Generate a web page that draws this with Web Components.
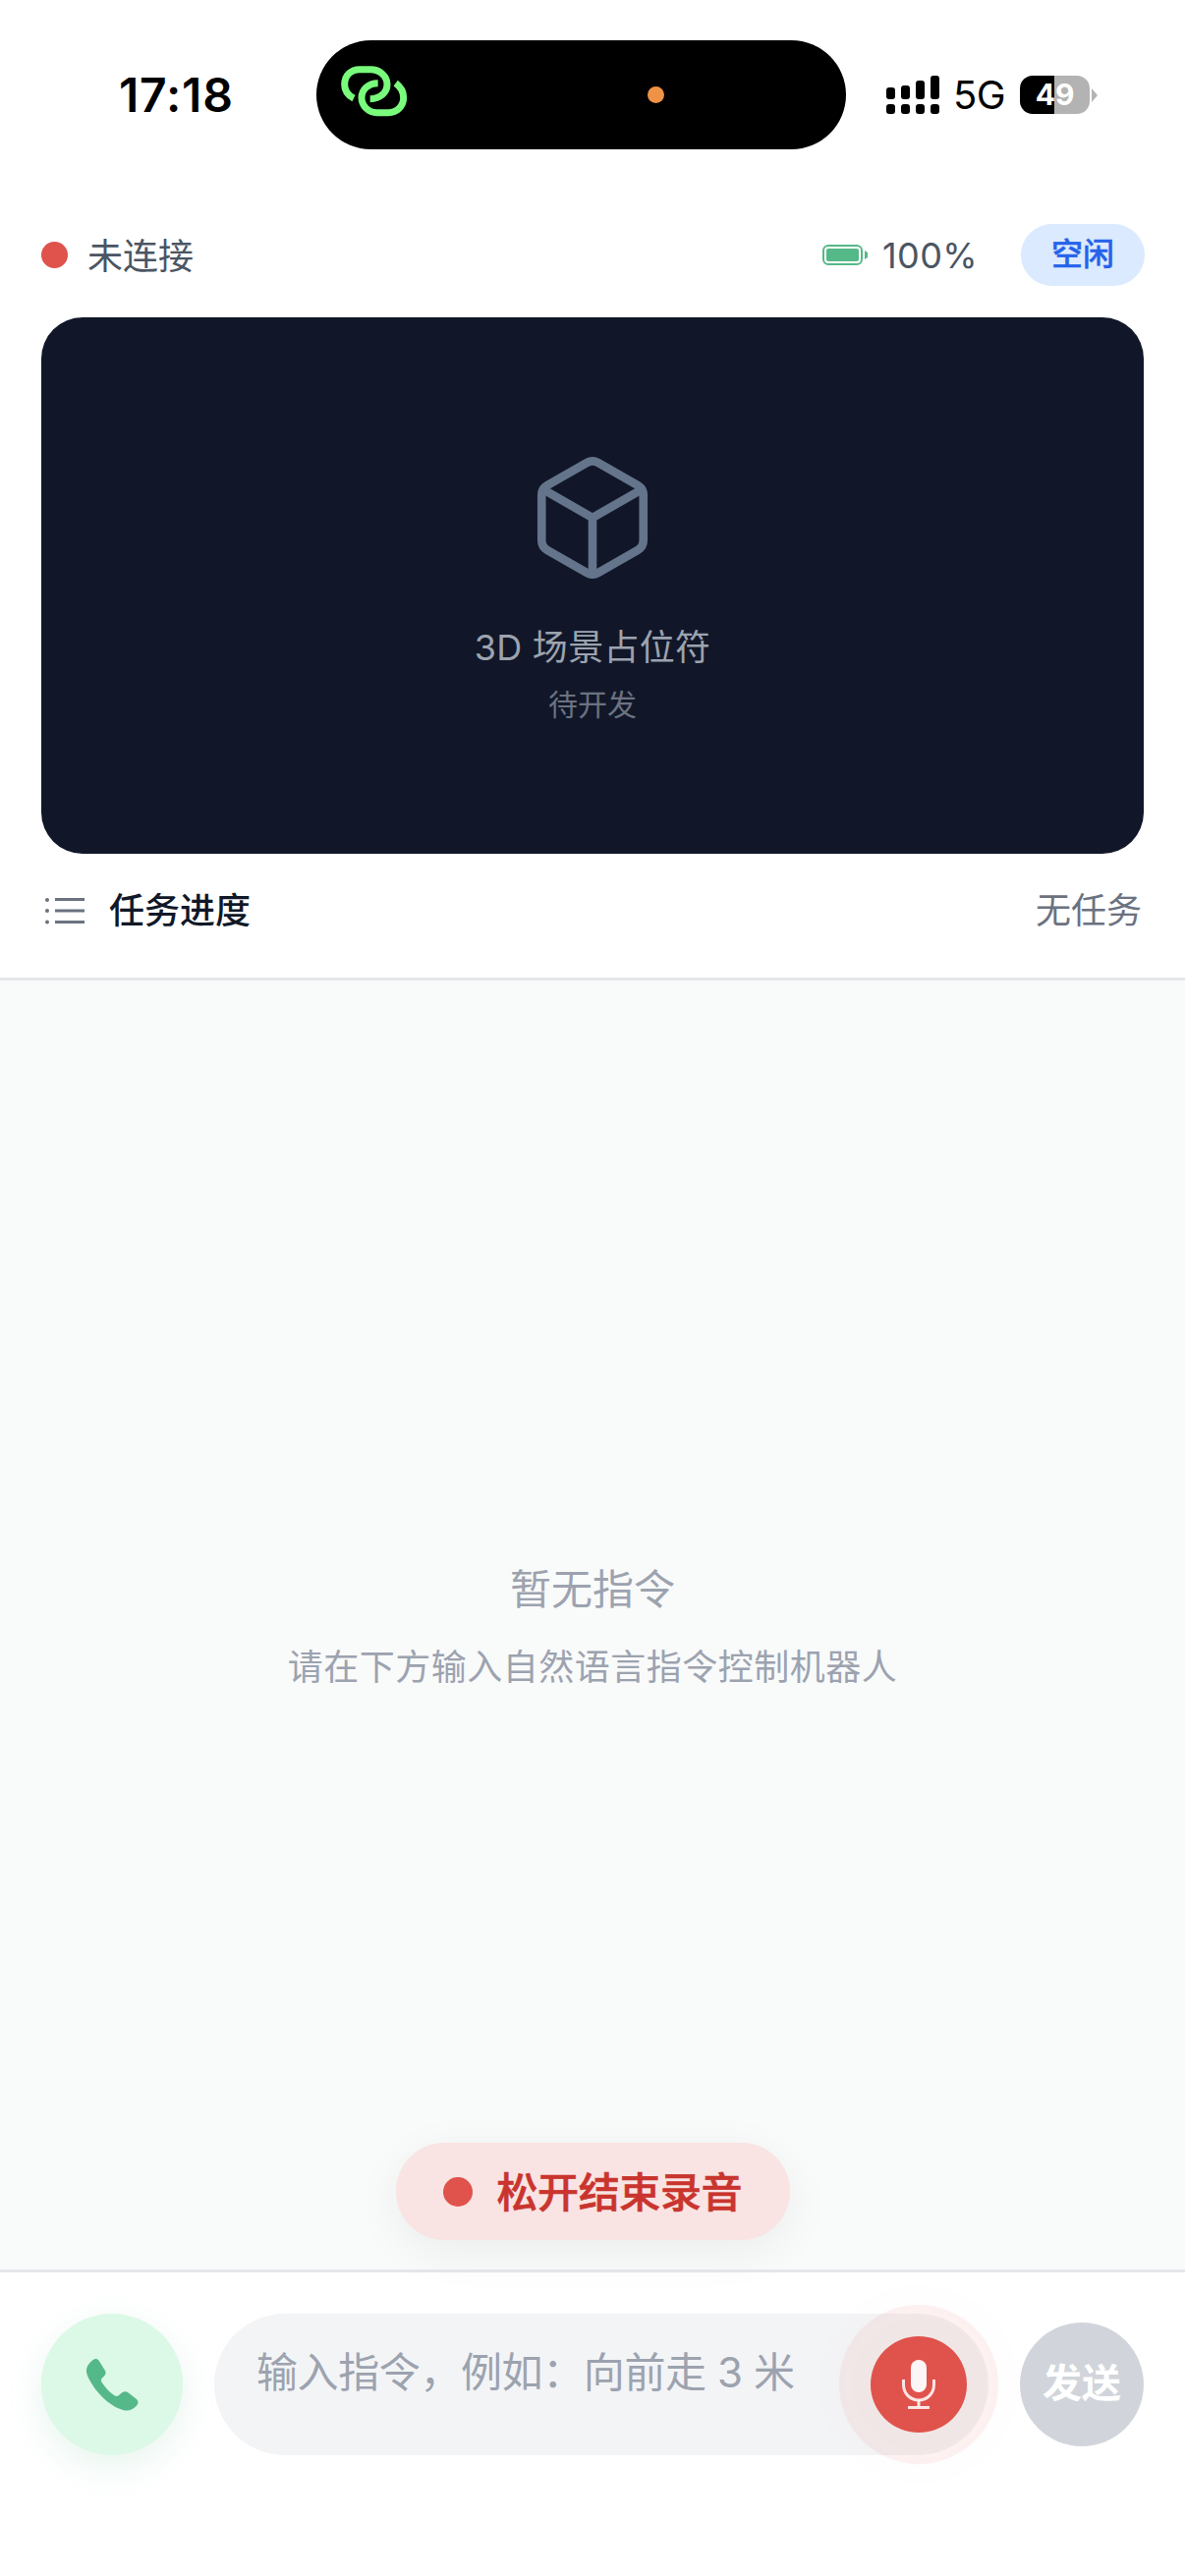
<!DOCTYPE html>
<html lang="zh-CN">
<head>
<meta charset="utf-8">
<title>Robot</title>
<style>
  html, body { margin: 0; padding: 0; background: #fff; }
  body {
    width: 1206px;
    height: 2622px;
    display: flex;
    flex-direction: column;
    overflow: hidden;
    font-family: Inter, "Noto Sans CJK SC", sans-serif;
  }
</style>
</head>
<body>
<phone-status time="17:18" battery="49"></phone-status>
<robot-header status="未连接" level="100%" state="空闲"></robot-header>
<scene-card>
  <span slot="title">3D 场景占位符</span>
  <span slot="note">待开发</span>
</scene-card>
<task-row label="任务进度" value="无任务"></task-row>
<message-list>
  <span slot="title">暂无指令</span>
  <span slot="hint">请在下方输入自然语言指令控制机器人</span>
  <record-toast slot="overlay">松开结束录音</record-toast>
</message-list>
<input-bar placeholder="输入指令，例如：向前走 3 米" send="发送"></input-bar>

<script>
// small helper so each element only parses its template once
function makeTemplate(html) {
  const el = document.createElement("template");
  el.innerHTML = html;
  return el;
}

class BaseEl extends HTMLElement {
  constructor(tpl) {
    super();
    this.attachShadow({ mode: "open" }).appendChild(tpl.content.cloneNode(true));
  }
  fill(id, attr) {
    this.shadowRoot.getElementById(id).textContent = this.getAttribute(attr) || "";
  }
}

const statusTpl = makeTemplate(`
<style>
  :host { display: grid; grid-template-columns: 322px 539px 1fr; padding-top: 41px; height: 111px; flex: none; }
  #time { padding-left: 121px; align-self: center; font-size: 48px; font-weight: 600; color: #000; letter-spacing: .8px; line-height: 111px; }
  #island { background: #000; border-radius: 56px; height: 111px; display: flex; align-items: center; justify-content: space-between; padding: 0 185px 0 25px; box-sizing: border-box; }
  #island svg { display: block; margin-top: -8px; }
  #cam { width: 17px; height: 17px; border-radius: 50%; background: #f09246; }
  #right { display: flex; align-items: center; padding-left: 41px; }
  #net { font-size: 40px; margin-left: 14px; margin-right: 15px; color: #000; line-height: 48px; letter-spacing: -.5px; }
  #batt { width: 71px; height: 39px; border-radius: 13px; background: linear-gradient(90deg, #000 35px, #b3b3b3 35px); color: #fff; font-size: 30px; font-weight: 700; line-height: 39px; text-align: center; }
  #cap { width: 0; height: 0; border-left: 6px solid #b3b3b3; border-top: 7px solid transparent; border-bottom: 7px solid transparent; margin-left: 2px; }
</style>
<div id="time"></div>
<div id="island">
  <svg width="68" height="53" viewBox="81 120 204 159" fill="none" stroke="#79fb7c" stroke-width="21">
    <path d="M120 222C100 212 92 198 92 180C92 152 112 134 138 134H172C200 134 222 155 222 180C222 205 200 224 170 224"/>
    <path d="M248 176C264 188 272 202 272 220C272 246 252 266 226 266H192C164 266 144 245 144 220C144 196 164 176 194 176"/>
  </svg>
  <div id="cam"></div>
</div>
<div id="right">
  <svg width="54" height="39" viewBox="0 0 54 39" fill="#000">
    <rect x="0" y="12" width="9" height="12" rx="3"/><rect x="15" y="10" width="9" height="14" rx="3"/>
    <rect x="30" y="5" width="9" height="19" rx="3"/><rect x="45" y="0" width="9" height="24" rx="3"/>
    <rect x="0" y="29" width="9" height="10" rx="3"/><rect x="15" y="29" width="9" height="10" rx="3"/>
    <rect x="30" y="29" width="9" height="10" rx="3"/><rect x="45" y="29" width="9" height="10" rx="3"/>
  </svg>
  <span id="net">5G</span>
  <div id="batt"></div>
  <div id="cap"></div>
</div>
`);

class PhoneStatus extends BaseEl {
  constructor() { super(statusTpl); }
  connectedCallback() {
    this.fill("time", "time");
    this.fill("batt", "battery");
  }
}
customElements.define("phone-status", PhoneStatus);

const headerTpl = makeTemplate(`
<style>
  :host { display: flex; align-items: center; flex: none; height: 63px; margin-top: 76px; padding: 0 41px 0 42px; color: #4b5563; font-size: 36px; }
  #dot { width: 27px; height: 27px; border-radius: 50%; background: #e0524c; margin-right: 20px; }
  #status { margin-top: -3px; }
  #gap { flex: 1; }
  svg { display: block; margin-right: 14px; }
  #level { letter-spacing: .4px; }
  #badge { width: 126px; height: 63px; border-radius: 32px; background: #dbeafe; color: #2563eb; font-size: 32px; font-weight: 500; -webkit-text-stroke: .4px #2563eb; line-height: 61px; text-align: center; margin-left: 44px; }
</style>
<div id="dot"></div>
<span id="status"></span>
<div id="gap"></div>
<svg width="47" height="21" viewBox="0 0 47 21" fill="none">
  <rect x="1" y="1" width="39" height="19" rx="5" stroke="#55b888" stroke-width="2"/>
  <rect x="4" y="4" width="33" height="13" rx="2" fill="#55b888"/>
  <path d="M43 6l3 2v5l-3 2z" fill="#55b888"/>
</svg>
<span id="level"></span>
<div id="badge"></div>
`);

class RobotHeader extends BaseEl {
  constructor() { super(headerTpl); }
  connectedCallback() {
    this.fill("status", "status");
    this.fill("level", "level");
    this.fill("badge", "state");
  }
}
customElements.define("robot-header", RobotHeader);

const sceneTpl = makeTemplate(`
<style>
  :host { display: flex; flex-direction: column; align-items: center; justify-content: center; flex: none; box-sizing: border-box; height: 546px; margin: 32px 42px 0; padding-bottom: 1px; background: #111729; border-radius: 42px; }
  svg { display: block; margin: 3px 0; }
  #title { color: #9ca3af; font-size: 36px; line-height: 44px; margin-top: 38px; letter-spacing: .3px; }
  #note { color: #6b7280; font-size: 30px; line-height: 40px; margin-top: 16px; }
</style>
<svg width="138" height="138" viewBox="0 0 24 24" fill="none" stroke="#64748b" stroke-width="1.500" stroke-linecap="round" stroke-linejoin="round">
  <path d="M21 8a2 2 0 0 0-1-1.730l-7-4a2 2 0 0 0-2 0l-7 4A2 2 0 0 0 3 8v8a2 2 0 0 0 1 1.730l7 4a2 2 0 0 0 2 0l7-4A2 2 0 0 0 21 16Z"/>
  <path d="m3.300 7 8.700 5 8.700-5"/>
  <path d="M12 22V12"/>
</svg>
<div id="title"><slot name="title"></slot></div>
<div id="note"><slot name="note"></slot></div>
`);

class SceneCard extends BaseEl {
  constructor() { super(sceneTpl); }
}
customElements.define("scene-card", SceneCard);

const taskTpl = makeTemplate(`
<style>
  :host { display: flex; align-items: center; flex: none; padding: 36px 44px 46px 46px; line-height: 44px; font-size: 36px; border-bottom: 3px solid #e5e7eb; }
  svg { display: block; margin-right: 25px; }
  #label { color: #111827; font-weight: 500; flex: 1; }
  #value { color: #6b7280; }
</style>
<svg width="40" height="28" viewBox="0 0 40 28" fill="#6b7280">
  <rect x="0" y="1" width="4" height="4" rx="2"/><rect x="10" y="1" width="30" height="3"/>
  <rect x="0" y="12" width="4" height="4" rx="2"/><rect x="10" y="12.500" width="30" height="3"/>
  <rect x="0" y="23.500" width="4" height="4" rx="2"/><rect x="10" y="24" width="30" height="3"/>
</svg>
<span id="label"></span>
<span id="value"></span>
`);

class TaskRow extends BaseEl {
  constructor() { super(taskTpl); }
  connectedCallback() {
    this.fill("label", "label");
    this.fill("value", "value");
  }
}
customElements.define("task-row", TaskRow);

const listTpl = makeTemplate(`
<style>
  :host { display: flex; flex-direction: column; align-items: center; justify-content: center; flex: 1; box-sizing: border-box; padding-top: 3px; position: relative; z-index: 1; background: #f9fafa; color: #9ca3af; border-bottom: 3px solid #e5e7eb; }
  #title { font-size: 42px; line-height: 56px; }
  #hint { font-size: 36px; line-height: 48px; margin-top: 27px; letter-spacing: .5px; }
  #overlay { position: absolute; left: 0; right: 0; bottom: 30px; display: flex; justify-content: center; }
</style>
<div id="title"><slot name="title"></slot></div>
<div id="hint"><slot name="hint"></slot></div>
<div id="overlay"><slot name="overlay"></slot></div>
`);

class MessageList extends BaseEl {
  constructor() { super(listTpl); }
}
customElements.define("message-list", MessageList);

const toastTpl = makeTemplate(`
<style>
  :host { display: flex; align-items: center; box-sizing: border-box; height: 99px; width: 401px; padding-left: 48px; border-radius: 50px; background: #f9e3e3; color: #c9352e; font-size: 42px; font-weight: 500; -webkit-text-stroke: .6px #c9352e; letter-spacing: -.4px; box-shadow: 0 12px 48px rgba(0, 0, 0, .06); }
  #dot { width: 30px; height: 30px; border-radius: 50%; background: #e0524c; margin-right: 25px; }
  #text { margin-bottom: 5px; }
</style>
<div id="dot"></div>
<span id="text"><slot></slot></span>
`);

class RecordToast extends BaseEl {
  constructor() { super(toastTpl); }
}
customElements.define("record-toast", RecordToast);

const inputTpl = makeTemplate(`
<style>
  :host { display: flex; align-items: center; gap: 32px; flex: none; padding: 42px 42px 123px; }
  #call { width: 144px; height: 144px; flex: none; border-radius: 50%; background: #dcf8e7; display: flex; align-items: center; justify-content: center; box-shadow: 0 12px 36px rgba(85, 184, 136, .14); }
  #box { flex: 1; height: 144px; position: relative; box-sizing: border-box; padding: 34px 0 0 43px; border-radius: 72px; background: #f3f4f6; }
  #hint { font-size: 42px; line-height: 52px; color: #9ca3af; white-space: pre; letter-spacing: -.4px; }
  #mic { position: absolute; top: 23px; right: 22px; width: 98px; height: 98px; border-radius: 50%; background: #e0524c; display: flex; align-items: center; justify-content: center; box-shadow: 0 0 0 32px rgba(224, 82, 76, .07), 0 0 60px 32px rgba(224, 82, 76, .02); }
  #send { width: 126px; height: 126px; flex: none; border-radius: 50%; background: #d1d5db; color: #fff; font-size: 40px; font-weight: 600; line-height: 124px; text-align: center; }
</style>
<div id="call">
  <svg width="54" height="55" viewBox="0 0 54 55" fill="#55b888">
    <path d="M7 2.500C9.500 .2 12 .5 13.500 2.500L20 13C21 15 20.500 17 19 18.500L16.500 21C15.500 22.500 16 24 17 25.500C20 30 24 34.500 29 38C30.500 39 32.500 39.500 34 38L37 35.500C39 34 41 33.700 43 35L52 42C54 44 54 46.500 52 48.500C48 53 44 54.500 38 53C24 49 9 34 2 18C-.5 12 1.500 7 7 2.500Z"/>
  </svg>
</div>
<div id="box">
  <span id="hint"></span>
  <div id="mic">
    <svg width="34" height="50" viewBox="0 0 34 50" fill="none" stroke="#fff" stroke-opacity=".85">
      <rect x="9" y="0" width="16" height="33" rx="8" fill="#fff" fill-opacity=".95" stroke="none"/>
      <path d="M1.500 20V25C1.500 34 8 41 17 41C26 41 32.500 34 32.500 25V20" stroke-width="3"/>
      <path d="M17 41V48" stroke-width="3"/>
      <path d="M6 48.500H28" stroke-width="3"/>
    </svg>
  </div>
</div>
<div id="send"></div>
`);

class InputBar extends BaseEl {
  constructor() { super(inputTpl); }
  connectedCallback() {
    this.fill("hint", "placeholder");
    this.fill("send", "send");
  }
}
customElements.define("input-bar", InputBar);
</script>
</body>
</html>
